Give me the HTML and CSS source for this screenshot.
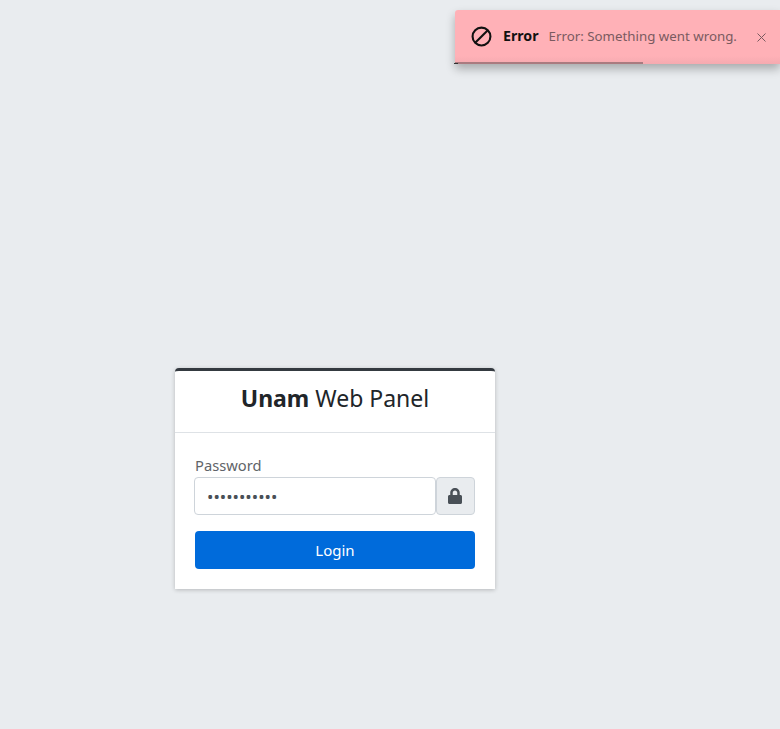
FILE: index.html
```html
<!DOCTYPE html>
<html lang="en">
<head>
<meta charset="utf-8">
<title>Unam Web Panel</title>
<link rel="stylesheet" href="styles.css">
</head>
<body>
<main class="page">
  <section class="card">
    <h1 class="card-title"><b>Unam</b> Web Panel</h1>
    <form class="card-body">
      <label class="label" for="pw">Password</label>
      <div class="input-group">
        <input class="input" id="pw" type="password" value="12345678901">
        <span class="addon">
          <svg class="lock" viewBox="0 0 448 512" width="14" height="16"><path fill="currentColor" d="M400 224h-24v-72C376 68.200 307.800 0 224 0S72 68.200 72 152v72H48c-26.500 0-48 21.500-48 48v192c0 26.500 21.500 48 48 48h352c26.500 0 48-21.500 48-48V272c0-26.500-21.500-48-48-48zm-104 0H152v-72c0-39.700 32.300-72 72-72s72 32.300 72 72v72z"/></svg>
        </span>
      </div>
      <button class="btn" type="button">Login</button>
    </form>
  </section>
</main>
<div class="toast">
  <svg class="toast-icon" viewBox="0 0 20 20" width="21" height="21"><circle cx="10" cy="10" r="8.500" fill="none" stroke="currentColor" stroke-width="2"/><path d="M4 16 16 4" stroke="currentColor" stroke-width="2"/></svg>
  <strong class="toast-title">Error</strong>
  <span class="toast-msg">Error: Something went wrong.</span>
  <svg class="toast-close" viewBox="0 0 9 9" width="9" height="9"><path d="M.5.500l8 8M8.500.500l-8 8" stroke="currentColor" stroke-width="1" fill="none"/></svg>
  <div class="toast-progress"></div>
</div>
</body>
</html>
```
FILE: styles.css
```css
* { box-sizing: border-box; }
html, body { margin: 0; height: 100%; }
body {
  background: #e9ecef;
  font-family: "Noto Sans", sans-serif;
  font-size: 16px;
  color: #212529;
  overflow: hidden;
}
.page { padding: 368px 0 0 175px; }
.card {
  width: 320px;
  height: 221px;
  background: #fff;
  border-top: 3px solid #343a40;
  border-radius: 4px 4px 0 0;
  box-shadow: 0 1px 4px rgba(0,0,0,.22);
}
.card-title {
  margin: 0;
  height: 62px;
  border-bottom: 1px solid #dee2e6;
  font-size: 23px;
  font-weight: 400;
  line-height: 55px;
  text-align: center;
}
.card-body { padding: 22px 20px 0; }
.label { display: block; font-size: 14.700px; line-height: 21px; color: #5f6468; }
.input-group { display: flex; height: 38px; margin-top: 1px; }
.input {
  flex: 1;
  min-width: 0;
  margin-left: -1px;
  padding: 0 12px;
  border: 1px solid #ced4da;
  border-radius: 4px;
  font: 17px "Noto Sans", sans-serif;
  color: #495057;
  background: #fff;
  outline: none;
}
.addon {
  width: 39px;
  display: flex;
  align-items: center;
  justify-content: center;
  padding-right: 2px;
  border: 1px solid #ced4da;
  border-radius: 4px;
  background: #e9ecef;
  color: #495057;
}
.btn {
  display: block;
  width: 100%;
  height: 38px;
  margin-top: 16px;
  border: 0;
  border-radius: 4px;
  background: #006bdb;
  color: #fff;
  font: 15px "Noto Sans", sans-serif;
}
.toast {
  position: absolute;
  top: 10px;
  right: 0;
  width: 325px;
  height: 54px;
  display: flex;
  align-items: center;
  padding-left: 16px;
  background: linear-gradient(#ffb1b7 85%, #f5aab0);
  border-radius: 3px 0 0 3px;
  box-shadow: 0 5px 10px rgba(0,0,0,.28);
  font-size: 14px;
}
.toast-icon { color: #111; flex: none; margin-top: -2px; }
.toast-title { margin: -3px 0 0 11px; font-size: 14.200px; font-weight: 700; color: #111; }
.toast-msg { margin: -3px 0 0 10px; font-size: 13.300px; color: #7a5a5f; white-space: nowrap; }
.toast-close { position: absolute; right: 14px; top: 23px; color: #7a5a5f; }
.toast-progress {
  position: absolute;
  left: 0;
  bottom: 0;
  width: 188px;
  height: 2px;
  background: #a97b80;
}
.toast-progress::before {
  content: "";
  position: absolute;
  left: -1px;
  bottom: 0;
  width: 4px;
  height: 1px;
  background: #333;
}
```
